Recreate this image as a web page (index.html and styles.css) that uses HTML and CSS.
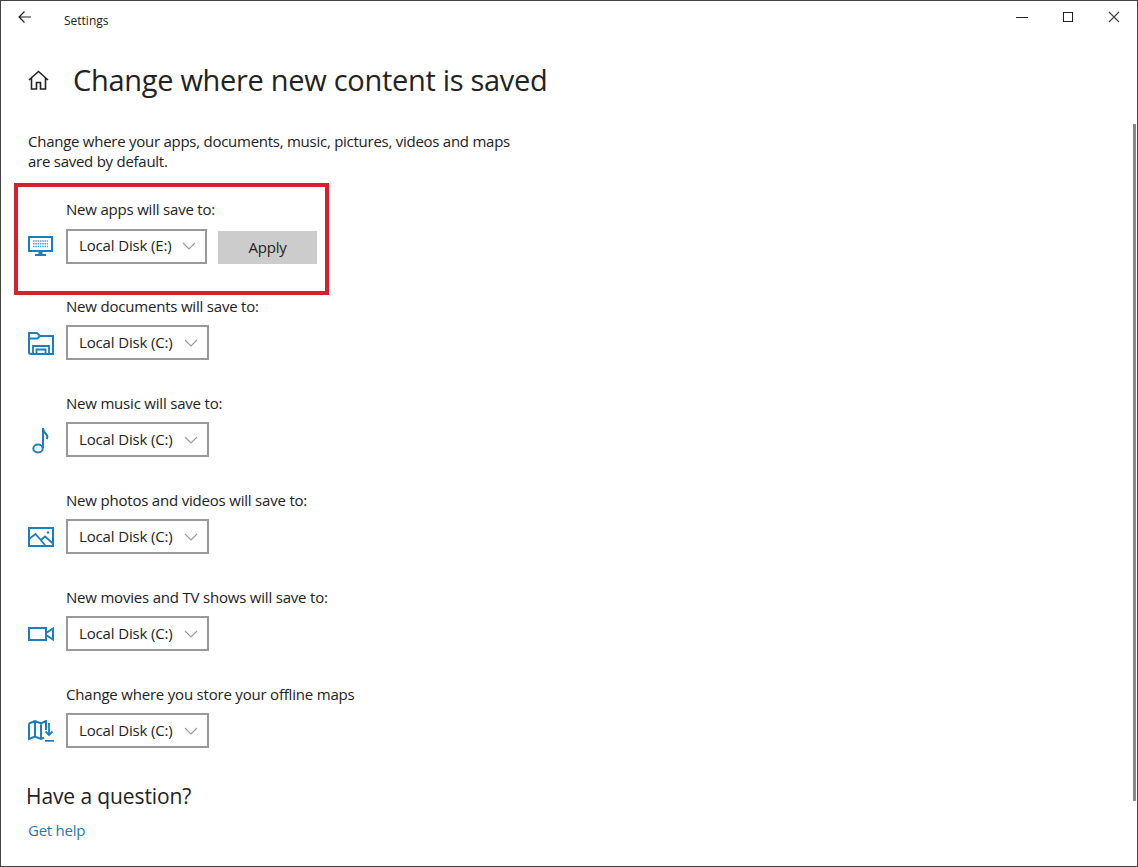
FILE: index.html
```html
<!DOCTYPE html>
<html lang="en">
<head>
  <meta charset="UTF-8">
  <title>Settings</title>
  <link rel="stylesheet" href="styles.css">
</head>
<body>

<div class="window">
  <header class="titlebar">
    <svg class="back" width="16" height="14" viewBox="0 0 16 14"><path d="M14 7H2M7.500 1.500 2 7l5.500 5.500" fill="none" stroke="#222" stroke-width="1.200"/></svg>
    <span class="app-name">Settings</span>
    <div class="win-controls">
      <svg width="12" height="12" viewBox="0 0 12 12"><path d="M0 6.500h12" stroke="#222"/></svg>
      <svg width="12" height="12" viewBox="0 0 12 12"><rect x="1.500" y="1.500" width="9" height="9" fill="none" stroke="#222"/></svg>
      <svg width="12" height="12" viewBox="0 0 12 12"><path d="M1 1l10 10M11 1 1 11" stroke="#444" stroke-width="1.200"/></svg>
    </div>
  </header>

  <main class="content">
    <div class="page-head">
      <svg class="home" width="21" height="20" viewBox="0 0 21 20"><path d="M1 10 10.500 1.500 20 10M3.500 8v11h5v-6.500h4V19h5V8" fill="none" stroke="#222" stroke-width="1.600"/></svg>
      <h1>Change where new content is saved</h1>
    </div>

    <p class="intro">Change where your apps, documents, music, pictures, videos and maps<br>are saved by default.</p>

    <div class="locations">
      <div class="highlight"></div>

      <section class="loc">
        <label>New apps will save to:</label>
        <div class="loc-row">
          <div class="icon-slot">
            <svg width="25" height="20" viewBox="0 0 25 20"><rect x="1" y="1" width="23" height="14" fill="none" stroke="#1a7fc1" stroke-width="2"/><path d="M5 5h15M5 7.800h15M5 10.600h15" stroke="#4f9bd0" stroke-width="1.500" stroke-dasharray="1.500 .8"/><path d="M7 19h11" stroke="#1a7fc1" stroke-width="2"/><path d="M10.500 16h4v2h-4z" fill="#1a7fc1"/></svg>
          </div>
          <div class="select narrow"><span>Local Disk (E:)</span><svg class="chev" width="14" height="8" viewBox="0 0 14 8"><path d="M1 1l6 6 6-6" fill="none" stroke="#999" stroke-width="1.100"/></svg></div>
          <button class="apply">Apply</button>
        </div>
      </section>

      <section class="loc">
        <label>New documents will save to:</label>
        <div class="loc-row">
          <div class="icon-slot">
            <svg width="26" height="24" viewBox="0 0 26 24"><path d="M4.500 23H3c-1.200 0-2-.8-2-2V2h8l3 3h13v18h-3.500M1 7.500h8.500L12 5" fill="none" stroke="#1a7fc1" stroke-width="2"/><path d="M5 23v-8h16v8M8.500 23v-4.500h9V23M3 23h20" fill="none" stroke="#1a7fc1" stroke-width="1.800"/></svg>
          </div>
          <div class="select"><span>Local Disk (C:)</span><svg class="chev" width="14" height="8" viewBox="0 0 14 8"><path d="M1 1l6 6 6-6" fill="none" stroke="#999" stroke-width="1.100"/></svg></div>
        </div>
      </section>

      <section class="loc">
        <label>New music will save to:</label>
        <div class="loc-row">
          <div class="icon-slot">
            <svg width="26" height="28" viewBox="0 0 26 28"><ellipse cx="10" cy="22.500" rx="4.700" ry="4" fill="none" stroke="#1a7fc1" stroke-width="2"/><path d="M15 22V2c.3 3 1.500 4.500 3.200 6.200 1 1 1.500 2.800.6 5" fill="none" stroke="#1a7fc1" stroke-width="2"/></svg>
          </div>
          <div class="select"><span>Local Disk (C:)</span><svg class="chev" width="14" height="8" viewBox="0 0 14 8"><path d="M1 1l6 6 6-6" fill="none" stroke="#999" stroke-width="1.100"/></svg></div>
        </div>
      </section>

      <section class="loc">
        <label>New photos and videos will save to:</label>
        <div class="loc-row">
          <div class="icon-slot">
            <svg width="26" height="20" viewBox="0 0 26 20"><rect x="1" y="1" width="24" height="18" fill="none" stroke="#1a7fc1" stroke-width="2"/><path d="M1 12l6.500-5L17 18M13 13l4-3.500 8 7" fill="none" stroke="#1a7fc1" stroke-width="1.800"/><circle cx="20" cy="5.500" r="1.200" fill="#1a7fc1"/></svg>
          </div>
          <div class="select"><span>Local Disk (C:)</span><svg class="chev" width="14" height="8" viewBox="0 0 14 8"><path d="M1 1l6 6 6-6" fill="none" stroke="#999" stroke-width="1.100"/></svg></div>
        </div>
      </section>

      <section class="loc">
        <label>New movies and TV shows will save to:</label>
        <div class="loc-row">
          <div class="icon-slot">
            <svg width="26" height="14" viewBox="0 0 26 14"><rect x="1" y="1" width="17" height="12" fill="none" stroke="#1a7fc1" stroke-width="2"/><path d="M18 6l7-4.500v11L18 8" fill="none" stroke="#1a7fc1" stroke-width="2"/></svg>
          </div>
          <div class="select"><span>Local Disk (C:)</span><svg class="chev" width="14" height="8" viewBox="0 0 14 8"><path d="M1 1l6 6 6-6" fill="none" stroke="#999" stroke-width="1.100"/></svg></div>
        </div>
      </section>

      <section class="loc">
        <label>Change where you store your offline maps</label>
        <div class="loc-row">
          <div class="icon-slot">
            <svg width="26" height="22" viewBox="0 0 26 22"><path d="M1 3.500 7 1l6 2.500L18 1v9M13 3.500V19M7 1v15.500M1 3.500V19l6-2.500L13 19l3-1.200" fill="none" stroke="#1a7fc1" stroke-width="2"/><path d="M21 3v12M17.500 11.500 21 15l3.500-3.500M17 20.800h9" fill="none" stroke="#1a7fc1" stroke-width="1.800"/></svg>
          </div>
          <div class="select"><span>Local Disk (C:)</span><svg class="chev" width="14" height="8" viewBox="0 0 14 8"><path d="M1 1l6 6 6-6" fill="none" stroke="#999" stroke-width="1.100"/></svg></div>
        </div>
      </section>
    </div>

    <div class="help">
      <h2>Have a question?</h2>
      <a href="#">Get help</a>
    </div>
  </main>

  <div class="scrollbar"></div>
</div>

</body>
</html>
```

FILE: styles.css
```css
* {
  box-sizing: border-box;
}
html, body {
  margin: 0;
  height: 100%;
}
body {
  font-family: "Open Sans", "Noto Sans", sans-serif;
  color: #222;
  background-color: white;
  overflow: hidden;
}
.window {
  position: relative;
  height: 867px;
  border: 1px solid #444;
}
.titlebar {
  display: flex;
  align-items: center;
  height: 38px;
  padding-left: 16px;
}
.back {
  margin-top: -6px;
}
.app-name {
  margin-left: 31px;
  font-size: 12px;
}
.win-controls {
  margin-left: auto;
  display: flex;
  gap: 34px;
  margin-right: 17px;
  margin-top: -6px;
}
.content {
  padding-left: 27px;
}
.page-head {
  display: flex;
  align-items: center;
  height: 50px;
  margin-top: 15px;
}
.home {
  margin-right: 24px;
  margin-top: 2px;
}
h1 {
  margin: 0;
  font-size: 29px;
  font-weight: 400;
  letter-spacing: -0.3px;
}
.intro {
  margin: 27px 0 0;
  font-size: 15px;
  line-height: 20px;
  letter-spacing: -0.26px;
}
.locations {
  position: relative;
  margin-top: 27px;
}
.highlight {
  position: absolute;
  left: -14px;
  top: -15px;
  width: 315px;
  height: 112px;
  border: 4px solid #d6202e;
}
.loc {
  height: 97px;
  padding-top: 1px;
}
label {
  display: block;
  margin-left: 38px;
  font-size: 15px;
  line-height: 20px;
  letter-spacing: -0.2px;
}
.loc-row {
  display: flex;
  align-items: center;
  margin-top: 9px;
}
.icon-slot {
  display: flex;
  flex: 0 0 38px;
}
.select {
  display: flex;
  align-items: center;
  justify-content: space-between;
  width: 143px;
  height: 35px;
  padding: 0 9px 0 11px;
  border: 2px solid #999;
  font-size: 15px;
  letter-spacing: -0.15px;
}
.select span {
  margin-top: -2px;
}
.select.narrow {
  width: 141px;
}
.apply {
  width: 99px;
  height: 33px;
  margin: 3px 0 0 11px;
  padding-bottom: 2px;
  border: none;
  background-color: #ccc;
  color: #222;
  font-family: inherit;
  font-size: 15px;
  letter-spacing: -0.2px;
}
.help {
  margin-top: 2px;
  margin-left: -2px;
}
h2 {
  margin: 0;
  font-size: 21px;
  font-weight: 400;
  line-height: 28px;
  letter-spacing: -0.1px;
}
.help a {
  display: block;
  margin: 10px 0 0 2px;
  font-size: 15px;
  line-height: 20px;
  color: #1f78b4;
  text-decoration: none;
  letter-spacing: -0.25px;
}
.scrollbar {
  position: absolute;
  right: 1px;
  top: 123px;
  width: 3px;
  height: 677px;
  background-color: #888;
}
```
